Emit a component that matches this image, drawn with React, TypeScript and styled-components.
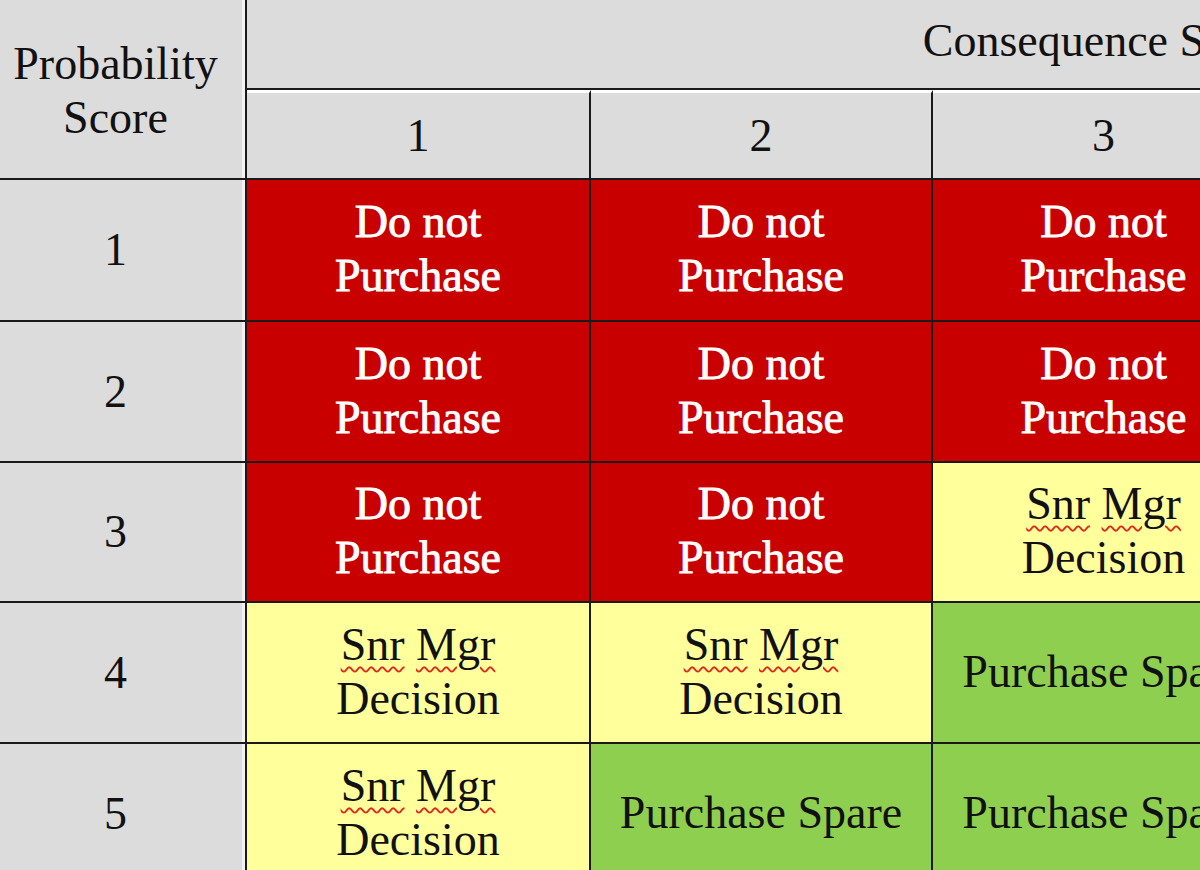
import styled, { createGlobalStyle } from 'styled-components';

const GlobalStyle = createGlobalStyle`
    html, body {
        margin: 0;
        padding: 0;
        background: #ffffff;
        overflow: hidden;
    }
`;

type Decision = 'stop' | 'review' | 'buy';

const palette: Record<Decision, string> = {
    stop: '#c80000',
    review: '#ffff9c',
    buy: '#8fcf50',
};

// only the first three consequence columns fit in the view
const matrix: Decision[][] = [
    ['stop', 'stop', 'stop'],
    ['stop', 'stop', 'stop'],
    ['stop', 'stop', 'review'],
    ['review', 'review', 'buy'],
    ['review', 'buy', 'buy'],
];

const Table = styled.div`
    display: grid;
    grid-template-columns: 247px 344px 342px 343px 343px 343px;
    grid-template-rows: 90px 90px 142px 141px 140px 141px 141px;
    width: 1200px;
    height: 870px;
    overflow: hidden;
    font-family: 'Liberation Serif', 'Times New Roman', serif;
    font-size: 46px;
    line-height: 1.17;
    color: #111111;
`;

const Cell = styled.div`
    display: flex;
    align-items: center;
    justify-content: center;
    text-align: center;
    box-sizing: border-box;
    border-right: 2px solid #1a1a1a;
    border-bottom: 2px solid #1a1a1a;
`;

const HeaderCell = styled(Cell)`
    background: #dcdcdc;
`;

const CornerCell = styled(HeaderCell)`
    grid-row: 1 / span 2;
    padding-right: 14px;
    padding-top: 4px;
    box-shadow: inset -3px 0 0 #f2f2f2;
`;

const TitleCell = styled(HeaderCell)`
    grid-column: 2 / span 5;
    padding-bottom: 6px;
`;

const ColumnCell = styled(HeaderCell)`
    border-top: 3px solid #ffffff;
`;

const RowLabel = styled(HeaderCell)`
    padding-right: 14px;
    box-shadow: inset -3px 0 0 #f2f2f2;
`;

const DecisionCell = styled(Cell)<{ $kind: Decision }>`
    background: ${(p) => palette[p.$kind]};
    color: ${(p) => (p.$kind === 'stop' ? '#ffffff' : '#111111')};
    -webkit-text-stroke: ${(p) => (p.$kind === 'stop' ? '0.9px #ffffff' : '0')};
    white-space: nowrap;
    padding-bottom: 2px;
`;

const Misspelt = styled.span`
    text-decoration: underline wavy #e0281c;
    text-decoration-thickness: 1.5px;
    text-underline-offset: 6px;
`;

function CellText({ kind }: { kind: Decision }) {
    if (kind === 'stop') {
        return (
            <span>
                Do not
                <br />
                Purchase
            </span>
        );
    }
    if (kind === 'review') {
        return (
            <span>
                <Misspelt>Snr</Misspelt> <Misspelt>Mgr</Misspelt>
                <br />
                Decision
            </span>
        );
    }
    return <span>Purchase Spare</span>;
}

function App() {
    const columns = [1, 2, 3];

    return (
        <>
            <GlobalStyle />
            <Table>
                <CornerCell>
                    <span>
                        Probability
                        <br />
                        Score
                    </span>
                </CornerCell>
                <TitleCell>Consequence Score</TitleCell>
                {columns.map((s) => (
                    <ColumnCell key={`c${s}`}>{s}</ColumnCell>
                ))}
                <ColumnCell />
                <ColumnCell />

                {matrix.map((row, r) => [
                    <RowLabel key={`r${r}`}>{r + 1}</RowLabel>,
                    ...row.map((kind, c) => (
                        <DecisionCell key={`${r}-${c}`} $kind={kind}>
                            <CellText kind={kind} />
                        </DecisionCell>
                    )),
                    <Cell key={`e${r}a`} />,
                    <Cell key={`e${r}b`} />,
                ])}
            </Table>
        </>
    );
}

export default App;
